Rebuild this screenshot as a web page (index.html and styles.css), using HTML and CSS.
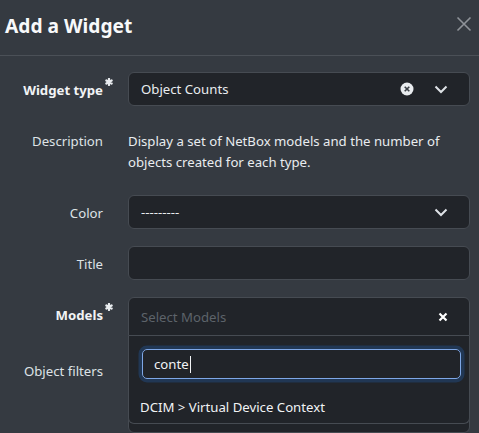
FILE: index.html
```html
<!DOCTYPE html>
<html lang="en">
<head>
<meta charset="utf-8">
<title>Add a Widget</title>
<link rel="stylesheet" href="styles.css">
</head>
<body>
<div class="modal">
  <header class="modal-header">
    <h1 class="modal-title">Add a Widget</h1>
    <button class="btn-close" type="button" aria-label="Close">
      <svg width="16" height="16" viewBox="0 0 16 16"><path d="M1.5 1.5 L14.5 14.5 M14.5 1.5 L1.5 14.5" stroke="currentColor" stroke-width="1.6" fill="none"/></svg>
    </button>
  </header>

  <form class="modal-body">
    <div class="row">
      <label class="form-label required">Widget type<svg class="req" viewBox="0 0 10 10"><path d="M5 1.2 V8.8 M1.7 3.1 L8.3 6.9 M8.3 3.1 L1.7 6.9" stroke-width="2.8" stroke-linecap="round"/></svg></label>
      <div class="control select">
        <span class="value">Object Counts</span>
        <span class="icons">
          <svg class="clear-circle" width="14" height="14" viewBox="0 0 14 14"><circle cx="7" cy="7" r="6.5" fill="#e9ecef"/><path d="M4.7 4.7 L9.3 9.3 M9.3 4.7 L4.7 9.3" stroke="#3a3f45" stroke-width="1.6"/></svg>
          <svg class="chevron" width="14" height="14" viewBox="0 0 14 14"><path d="M1.5 4.5 L7 10 L12.5 4.5" stroke="#dee2e6" stroke-width="2" fill="none"/></svg>
        </span>
      </div>
    </div>

    <div class="row desc-row">
      <label class="form-label">Description</label>
      <p class="desc">Display a set of NetBox models and the number of objects created for each type.</p>
    </div>

    <div class="row">
      <label class="form-label">Color</label>
      <div class="control select">
        <span class="value">---------</span>
        <span class="icons">
          <svg class="chevron" width="14" height="14" viewBox="0 0 14 14"><path d="M1.5 4.5 L7 10 L12.5 4.5" stroke="#dee2e6" stroke-width="2" fill="none"/></svg>
        </span>
      </div>
    </div>

    <div class="row">
      <label class="form-label">Title</label>
      <div class="control"></div>
    </div>

    <div class="row models-row">
      <label class="form-label required">Models<svg class="req" viewBox="0 0 10 10"><path d="M5 1.2 V8.8 M1.7 3.1 L8.3 6.9 M8.3 3.1 L1.7 6.9" stroke-width="2.8" stroke-linecap="round"/></svg></label>
      <div class="ts-wrapper">
        <div class="control select open">
          <span class="placeholder">Select Models</span>
          <span class="icons">
            <svg class="clear-x" width="10" height="10" viewBox="0 0 10 10"><path d="M1.5 1.5 L8.5 8.5 M8.5 1.5 L1.5 8.5" stroke="#ffffff" stroke-width="2.2"/></svg>
          </span>
        </div>
        <div class="dropdown">
          <div class="search">
            <span class="search-text">conte</span><span class="caret"></span>
          </div>
          <div class="option">DCIM &gt; Virtual Device Context</div>
        </div>
      </div>
    </div>

    <div class="row">
      <label class="form-label">Object filters</label>
      <div class="control textarea"></div>
    </div>
  </form>
</div>
</body>
</html>
```

FILE: styles.css
```css
html, body {
  margin: 0;
  padding: 0;
  background: #353a41;
}

body {
  font-family: "Noto Sans", "Open Sans", sans-serif;
  font-size: 13.2px;
  color: #dee2e6;
  overflow: hidden;
  height: 433px;
}

.modal {
  width: 479px;
}

.modal-header {
  display: flex;
  align-items: center;
  justify-content: space-between;
  height: 55px;
  box-sizing: content-box;
  padding: 0 7px 0 5px;
  border-bottom: 1px solid #4b5057;
}

.modal-title {
  margin: 0 0 4px;
  font-size: 19.2px;
  font-weight: 700;
  color: #f8f9fa;
}

.btn-close {
  background: none;
  border: 0;
  padding: 0;
  margin-bottom: 7px;
  color: #8f9399;
  display: flex;
}

.modal-body {
  padding: 16px 9px 0 0;
  display: flex;
  flex-direction: column;
  gap: 17px;
}

.row {
  display: grid;
  grid-template-columns: 128px 1fr;
  align-items: start;
}

.form-label {
  position: relative;
  text-align: right;
  padding: 8px 25px 0 0;
  line-height: 20px;
  color: #dee2e6;
}

.form-label.required {
  font-weight: 700;
  color: #f1f3f5;
}

.req {
  position: absolute;
  width: 8px;
  height: 8px;
  right: 15px;
  top: 6px;
  stroke: #e9ecef;
  fill: none;
}

.control {
  height: 34px;
  box-sizing: border-box;
  background: #212429;
  border: 1px solid #464b52;
  border-radius: 6px;
  display: flex;
  align-items: center;
  padding: 0 12px;
  color: #e9ecef;
}

.select .value {
  flex: 1;
}

.icons {
  display: flex;
  align-items: center;
  gap: 20px;
  margin-right: 9px;
}

.desc-row {
  padding-bottom: 5px;
}

.desc {
  margin: 0;
  padding-top: 8px;
  line-height: 21px;
  color: #e9ecef;
}

.models-row {
  position: relative;
  z-index: 2;
}

.ts-wrapper {
  position: relative;
}

.control.open {
  height: 39px;
  border-radius: 6px 6px 0 0;
}

.placeholder {
  flex: 1;
  color: #5d636a;
}

.dropdown {
  position: absolute;
  left: 0;
  right: 0;
  top: 39px;
  height: 88px;
  box-sizing: border-box;
  background: #212429;
  border: 1px solid #464b52;
  border-top: 0;
  border-radius: 0 0 6px 6px;
  padding: 13px 8px 0 13px;
}

.search {
  height: 30px;
  box-sizing: border-box;
  border: 1px solid #7ea7e6;
  border-radius: 5px;
  box-shadow: 0 0 0 3.5px #213754;
  display: flex;
  align-items: center;
  padding-left: 11px;
  color: #f1f3f5;
}

.caret {
  display: inline-block;
  width: 1px;
  height: 17px;
  background: #f1f3f5;
  margin-left: 1px;
}

.option {
  margin-top: 19px;
  margin-left: -2px;
  color: #f1f3f5;
}

.textarea {
  height: 80px;
}
```
